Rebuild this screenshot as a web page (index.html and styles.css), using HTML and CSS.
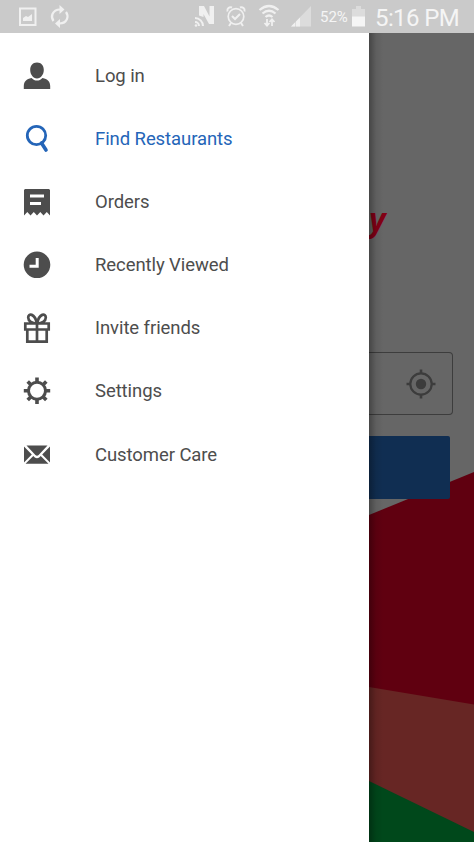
FILE: index.html
```html
<!DOCTYPE html>
<html lang="en">
<head>
<meta charset="utf-8">
<title>Navigation drawer</title>
<link rel="stylesheet" href="styles.css">
</head>
<body>
<header class="status">
  <svg class="status-icons" width="314" height="33" viewBox="0 0 314 33" fill="none" stroke="#f0f0f0">
    <path stroke-width="2" d="M20 8.500H35.500V25H20z"/>
    <path fill="#f0f0f0" stroke="none" d="M23 21v-3l3-2 2 1 4-3v7z"/>
    <path stroke-width="2.200" d="M53.500 21Q51 17.500 52.500 14Q54.500 9.500 60 9.500M66 12Q68.500 15.500 67 19Q65 23.500 59.500 23.500"/>
    <path fill="#f0f0f0" stroke="none" d="M59.500 5l5 4.500-5 4.500zM60 19v9l-5-4.500z"/>
    <path fill="#f0f0f0" stroke="none" d="M199 15.500V6h5l5.500 10.500V6h4.500v18h-5l-5.500-10v3z"/>
    <path stroke-width="2" d="M195 18a8 8 0 0 1 8 8M195 22a4 4 0 0 1 4 4"/>
    <circle cx="196" cy="25.500" r="1.300" fill="#f0f0f0" stroke="none"/>
    <circle cx="236" cy="16.500" r="7.800" stroke-width="1.700"/>
    <path stroke-width="2" d="M232 16l3 3 5-5M227.500 11.500c-1-3 2-5 4.500-4M244.500 11.500c1-3-2-5-4.500-4M231 23l-2 3M241 23l2 3"/>
    <path stroke-width="2.200" d="M259.500 10q9.500-8 19 0M262.500 13.500q6.500-5.500 13 0M265.500 17q3.500-3 7 0"/>
    <path stroke-width="1.800" d="M267 19v6M264.500 23l2.500 2.700 2.500-2.700M272 26v-6M269.500 22l2.500-2.700 2.500 2.700"/>
    <path fill="#dcdcdc" stroke="none" d="M291 26.500L311 6v20.500z"/>
    <path fill="#f0f0f0" stroke="none" d="M291 26.500l4-4v4zM296 26.500v-5l4-4v9z"/>
  </svg>
  <span class="percent">52%</span>
  <svg class="battery" width="14" height="21" viewBox="0 0 14 21"><path fill="#dcdcdc" d="M0 3h4V0h5v3h4v8H0z"/><path fill="#f5f5f5" d="M0 10.500h13V20.500H0z"/></svg>
  <span class="clock">5:16 PM</span>
</header>
<main class="screen">
  <nav class="drawer">
    <a class="item"><svg class="icon" viewBox="0 0 28 32"><path d="M14 2.500c4.500 0 6.800 3.200 6.800 7.500S18 18.500 14 18.500 7.200 14.300 7.200 10 9.500 2.500 14 2.500zM.8 29v-3c0-4.500 2.700-7 7.700-8 3 3.400 8 3.400 11 0 5 1 7.700 3.500 7.700 8v3z"/></svg><span>Log in</span></a>
    <a class="item active"><svg class="icon line" viewBox="0 0 28 32"><circle cx="13.500" cy="12.500" r="9.200" stroke-width="2.800"/><path d="M18.500 20l4.500 7" stroke-width="3.600" stroke-linecap="round"/></svg><span>Find Restaurants</span></a>
    <a class="item"><svg class="icon" viewBox="0 0 28 32"><path fill-rule="evenodd" d="M2 3h24l1 1v25.500l-3.200-3.500-3.300 3.500-3.200-3.500-3.300 3.500-3.200-3.500-3.300 3.500-3.200-3.500L1 29.500V4zM7 8.500v3h14v-3zM7 16v3h11v-3z"/></svg><span>Orders</span></a>
    <a class="item"><svg class="icon" viewBox="0 0 28 32"><path fill-rule="evenodd" d="M14 2.500a13.300 13.300 0 1 0 0 26.600 13.300 13.300 0 0 0 0-26.600zM12.700 9h3v9.700H6.500v-3h6.200z"/></svg><span>Recently Viewed</span></a>
    <a class="item"><svg class="icon line" viewBox="0 0 28 32" stroke-width="2.700"><path d="M2.300 11.500h23.400v6H2.300zM4.300 17.500h19.400v12.200H4.300zM14 11.500v18M14 11.500C9 11.500 5.200 9 5.200 5.500c0-4.500 6.500-4.500 8.800 6 2.300-10.500 8.800-10.500 8.800-6 0 3.500-3.800 6-8.800 6z"/></svg><span>Invite friends</span></a>
    <a class="item"><svg class="icon line" viewBox="0 0 28 32"><circle cx="14" cy="15.700" r="8.500" stroke-width="3"/><path stroke-width="3.600" d="M14 2.500v5M14 24v5M.8 15.700h5M22.200 15.700h5M4.700 6.400l3.500 3.500M19.800 21.500l3.500 3.500M4.700 25l3.500-3.500M19.800 9.900l3.500-3.500"/></svg><span>Settings</span></a>
    <a class="item"><svg class="icon" viewBox="0 0 28 32"><path d="M3.500 6.500h21L15.600 16q-1.600 1.500-3.200 0zM1 7.500L8.800 15.500 1 23.500zM27 7.500v16l-7.800-8zM10.300 17l1.200 1.200q2.500 2 5 0L17.700 17l7.800 7.800h-23z"/></svg><span>Customer Care</span></a>
  </nav>
  <section class="behind">
    <svg class="shapes" width="105" height="809" viewBox="0 0 105 809"><path fill="#600010" d="M0 482L105 439v240H0z"/><path fill="#672624" d="M0 654L105 671.500v138H0z"/><path fill="#00481b" d="M0 748L105 799v10H0z"/></svg>
    <div class="brand">y</div>
    <div class="field"><svg width="30" height="30" viewBox="0 0 30 30" fill="none" stroke="#3c3c3c" stroke-width="2.200"><circle cx="15" cy="15" r="10.700"/><circle cx="15" cy="15" r="5.200" fill="#3c3c3c" stroke="none"/><path stroke-width="2.600" d="M15 .5v4M15 25.500v4M.5 15h4M25.500 15h4"/></svg></div>
    <div class="button"></div>
  </section>
</main>
</body>
</html>
```
FILE: styles.css
```css
body {
  margin: 0;
  height: 842px;
  display: flex;
  flex-direction: column;
  overflow: hidden;
  font-family: Roboto, "Liberation Sans", sans-serif;
}
.status {
  height: 33px;
  display: flex;
  background: #cacaca;
  color: #f5f5f5;
  line-height: 34px;
  white-space: nowrap;
}
.status-icons { flex: none; }
.percent {
  width: 32px;
  padding-left: 6px;
  font-size: 15px;
}
.battery { margin-top: 6px; }
.clock {
  margin-left: 9px;
  font-size: 24px;
  line-height: 36px;
  letter-spacing: -.6px;
}
.screen {
  flex: 1;
  display: grid;
  grid-template-columns: 369px 105px;
}
.drawer {
  padding-top: 11px;
  background: #fff;
}
.item {
  height: 63.170px;
  padding-left: 23px;
  display: flex;
  align-items: center;
  gap: 44px;
  color: #4d4d4d;
  font-size: 18.500px;
  letter-spacing: -.08px;
}
.item.active { color: #2465b8; }
.icon {
  width: 28px;
  height: 32px;
  fill: currentColor;
}
.icon.line {
  fill: none;
  stroke: currentColor;
}
.behind {
  position: relative;
  overflow: hidden;
  background: #666;
}
.behind::after {
  content: "";
  position: absolute;
  inset: 0 auto 0 0;
  width: 14px;
  background: linear-gradient(90deg, rgba(0, 0, 0, .32), rgba(0, 0, 0, .08) 50%, transparent);
}
.shapes {
  position: absolute;
  inset: 0;
}
.brand {
  height: 40px;
  margin: 166px 0 113px 0;
  color: #820015;
  font: italic bold 32px/40px "Open Sans", sans-serif;
}
.field {
  box-sizing: border-box;
  width: 84px;
  height: 63px;
  padding-right: 16px;
  display: flex;
  align-items: center;
  justify-content: flex-end;
  border: 1.500px solid #3d3d3d;
  border-left: 0;
  border-radius: 0 4px 4px 0;
}
.button {
  position: relative;
  width: 81px;
  height: 63px;
  margin-top: 21px;
  border-radius: 0 2px 2px 0;
  background: #102e52;
}
```
